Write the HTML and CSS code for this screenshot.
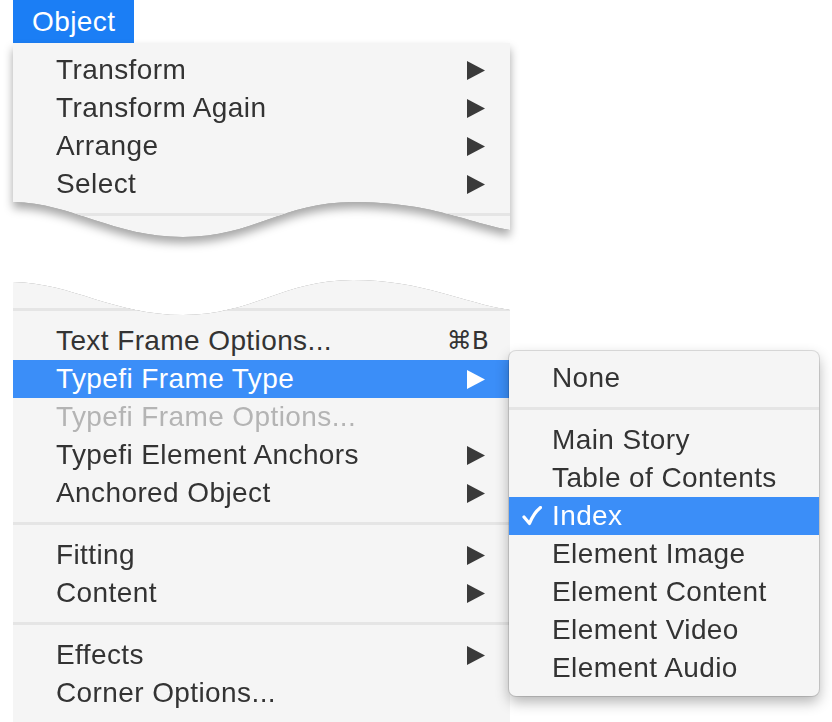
FILE: index.html
```html
<!DOCTYPE html>
<html lang="en">
<head>
    <meta charset="UTF-8">
    <title>Object menu</title>
    <link rel="stylesheet" href="styles.css">
</head>
<body>
    <div class="title">Object</div>

    <div class="menu-shadow">
        <div class="menu menu-top">
            <div class="item">Transform <svg class="arrow" viewBox="0 0 18 19"><polygon points="0,0 18,9.5 0,19"/></svg></div>
            <div class="item">Transform Again <svg class="arrow" viewBox="0 0 18 19"><polygon points="0,0 18,9.5 0,19"/></svg></div>
            <div class="item">Arrange <svg class="arrow" viewBox="0 0 18 19"><polygon points="0,0 18,9.5 0,19"/></svg></div>
            <div class="item">Select <svg class="arrow" viewBox="0 0 18 19"><polygon points="0,0 18,9.5 0,19"/></svg></div>
            <div class="sep"></div>
        </div>
    </div>

    <div class="lower">
        <div class="menu-shadow lower-shadow">
            <div class="menu menu-lower">
                <div class="sep sep-first"></div>
                <div class="item">Text Frame Options... <span class="key">⌘B</span></div>
                <div class="item active">Typefi Frame Type <svg class="arrow" viewBox="0 0 18 19"><polygon points="0,0 18,9.5 0,19"/></svg></div>
                <div class="item disabled">Typefi Frame Options...</div>
                <div class="item">Typefi Element Anchors <svg class="arrow" viewBox="0 0 18 19"><polygon points="0,0 18,9.5 0,19"/></svg></div>
                <div class="item">Anchored Object <svg class="arrow" viewBox="0 0 18 19"><polygon points="0,0 18,9.5 0,19"/></svg></div>
                <div class="sep"></div>
                <div class="item">Fitting <svg class="arrow" viewBox="0 0 18 19"><polygon points="0,0 18,9.5 0,19"/></svg></div>
                <div class="item">Content <svg class="arrow" viewBox="0 0 18 19"><polygon points="0,0 18,9.5 0,19"/></svg></div>
                <div class="sep"></div>
                <div class="item">Effects <svg class="arrow" viewBox="0 0 18 19"><polygon points="0,0 18,9.5 0,19"/></svg></div>
                <div class="item">Corner Options...</div>
            </div>
        </div>

        <!-- submenu of Typefi Frame Type -->
        <div class="submenu">
            <div class="item">None</div>
            <div class="sep"></div>
            <div class="item">Main Story</div>
            <div class="item">Table of Contents</div>
            <div class="item active"><svg class="check" viewBox="0 0 20 20"><path d="M2 11 L7.5 17.5 C10 11 13 6 18.5 1.5"/></svg>Index</div>
            <div class="item">Element Image</div>
            <div class="item">Element Content</div>
            <div class="item">Element Video</div>
            <div class="item">Element Audio</div>
        </div>
    </div>
</body>
</html>
```

FILE: styles.css
```css
html, body {
    overflow: hidden;
}

body {
    margin: 0;
    padding-left: 13px;
    background-color: #fff;
    font-family: 'Liberation Sans', Arial, sans-serif;
    font-size: 28px;
    letter-spacing: 0.4px;
    color: #333;
}

.title {
    display: inline-block;
    height: 43px;
    line-height: 43px;
    padding: 0 19px 0 19px;
    background-color: #1b7ef5;
    color: #fff;
    vertical-align: top;
}

.menu-shadow {
    width: 497px;
    filter: drop-shadow(0 0 0.7px rgba(0, 0, 0, 0.45)) drop-shadow(0 6px 5px rgba(0, 0, 0, 0.35));
}

.menu {
    background-color: #f5f5f5;
    padding-top: 8px;
}

.menu-top {
    padding-bottom: 13px;
    clip-path: path('M0 0 H497 V187 C455 180 420 159 340 159 C270 159 240 194 170 194 C100 194 60 160 0 159 Z');
}

.lower {
    position: relative;
    margin-top: 38px;
}

.lower-shadow {
    filter: drop-shadow(0 0 0.7px rgba(0, 0, 0, 0.45));
}

.menu-lower {
    padding-top: 30px;
    padding-bottom: 40px;
    clip-path: path('M0 4 C60 5 100 37 170 37 C240 37 270 2 340 2 C410 2 450 25 497 32 V520 H0 Z');
}

.item {
    display: flex;
    align-items: center;
    justify-content: space-between;
    height: 38px;
    line-height: 38px;
    padding: 0 25px 0 43px;
    white-space: nowrap;
}

.item.active {
    background-color: #3b8ef8;
    color: #fff;
}

.item.disabled {
    color: #b4b4b4;
}

.arrow {
    width: 18px;
    height: 19px;
    fill: #3a3a3a;
}

.active .arrow {
    fill: #fff;
}

.key {
    font-family: 'DejaVu Sans', 'Liberation Sans', sans-serif;
    font-size: 25px;
    letter-spacing: 0;
    margin-right: -4px;
}

.sep {
    height: 3px;
    margin: 10px 0 11px;
    background-color: #e5e5e5;
}

.sep-first {
    margin-top: 0;
}

.submenu {
    position: absolute;
    left: 496px;
    top: 73px;
    width: 310px;
    padding: 8px 0 9px;
    background-color: #f5f5f5;
    border-radius: 7px;
    box-shadow: 0 0 0 1px rgba(0, 0, 0, 0.12), 0 6px 14px rgba(0, 0, 0, 0.3);
}

.submenu .item {
    justify-content: flex-start;
    position: relative;
}

.check {
    position: absolute;
    left: 13px;
    top: 9px;
    width: 20px;
    height: 20px;
    fill: none;
    stroke: #fff;
    stroke-width: 3.2;
    stroke-linecap: round;
    stroke-linejoin: round;
}
```
